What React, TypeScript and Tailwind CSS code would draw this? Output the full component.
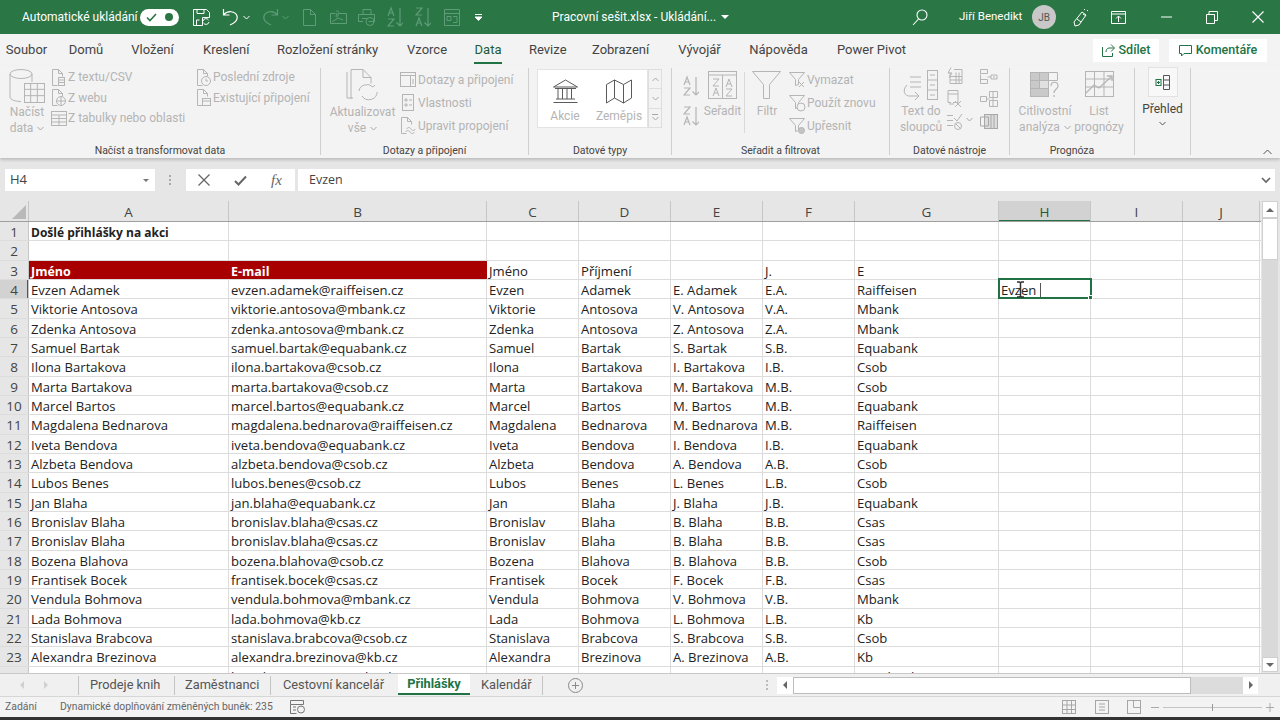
import React from 'react';

const G = '#b5b5b5';
const DIM = '#5f9c79';

const Ic = ({ w, h, s = G, sw = 1, children }: { w: number; h: number; s?: string; sw?: number; children: React.ReactNode }) => (
  <svg width={w} height={h} viewBox={`0 0 ${w} ${h}`} fill="none" stroke={s} strokeWidth={sw} className="shrink-0">
    {children}
  </svg>
);

const Chevron = ({ s = '#a8a8a8' }: { s?: string }) => (
  <svg width="7" height="5" viewBox="0 0 7 5" fill="none" stroke={s} className="shrink-0">
    <path d="M.5 1l3 3 3-3" />
  </svg>
);

const Doc = ({ children }: { children?: React.ReactNode }) => (
  <Ic w={16} h={19}>
    <path d="M1.5 17.5v-16h6l4 4v3M7.5 1.5v4h4M1.5 17.5h5" />
    {children}
  </Ic>
);

const Funnel = ({ children }: { children?: React.ReactNode }) => (
  <Ic w={17} h={18}>
    <path d="M.5 1.5h15l-6 7v5l-3 1v-6z" />
    {children}
  </Ic>
);

const AZ = ({ s = G, flip = false }: { s?: string; flip?: boolean }) => (
  <svg width="16" height="22" viewBox="0 0 16 22" fill="none" stroke={s} strokeWidth="1.2" className="shrink-0">
    <path d="M13 2v18M9.5 16.5l3.500 3.500 3.500-3.500" />
    {flip ? (
      <>
        <path d="M1 2h6l-6 7h6" />
        <path d="M1 20l3-8 3 8M2 17h4" />
      </>
    ) : (
      <>
        <path d="M1 10l3-8 3 8M2 7h4" />
        <path d="M1 13h6l-6 7h6" />
      </>
    )}
  </svg>
);

const Table = ({ x, y, w, h }: { x: number; y: number; w: number; h: number }) => (
  <g>
    <rect x={x + 0.5} y={y + 0.5} width={w} height={h} fill="#f3f3f3" />
    <path d={`M${x + 0.5} ${y + h / 3}h${w}M${x + 0.5} ${y + (2 * h) / 3}h${w}M${x + w / 3} ${y}v${h}M${x + (2 * w) / 3} ${y}v${h}`} />
  </g>
);

const Small = ({ icon, label, gap = 'gap-[1px]', h = 'h-[23px]', iw = 'w-[16px]' }: { icon: React.ReactNode; label: string; gap?: string; h?: string; iw?: string }) => (
  <div className={`flex items-center whitespace-nowrap text-[12px] text-[#b4b4b4] ${gap} ${h}`}>
    <div className={`flex justify-center ${iw}`}>{icon}</div>
    <span>{label}</span>
  </div>
);

const Big = ({ icon, lines, w, caret = false, cls = '' }: { icon: React.ReactNode; lines: string[]; w: string; caret?: boolean; cls?: string }) => (
  <div className={`flex flex-col items-center text-[12px] leading-[16px] text-[#b4b4b4] ${w} ${cls}`}>
    <div className="flex h-[36px] items-center justify-center">{icon}</div>
    {lines.map((l, i) => (
      <div key={l} className="flex items-center gap-[4px] whitespace-nowrap">
        {l}
        {caret && i === lines.length - 1 && <Chevron />}
      </div>
    ))}
  </div>
);

const Group = ({ w, label, children }: { w: string; label: string; children: React.ReactNode }) => (
  <div className={`my-[2px] flex h-[87px] shrink-0 flex-col border-r border-[#cfcfcf] ${w}`}>
    <div className="flex h-[74px]">{children}</div>
    <div className="h-[13px] whitespace-nowrap text-center text-[10.500px] leading-[17px] text-[#444444]">{label}</div>
  </div>
);

const tabs = [
  ['Soubor', 'w-[43px] ml-[5px]'],
  ['Domů', 'w-[36px] ml-[20px]'],
  ['Vložení', 'w-[43px] ml-[27px]'],
  ['Kreslení', 'w-[45px] ml-[29px]'],
  ['Rozložení stránky', 'w-[101px] ml-[29px]'],
  ['Vzorce', 'w-[40px] ml-[29px]'],
  ['Data', 'w-[28px] ml-[27px]'],
  ['Revize', 'w-[36px] ml-[27px]'],
  ['Zobrazení', 'w-[57px] ml-[27px]'],
  ['Vývojář', 'w-[45px] ml-[28px]'],
  ['Nápověda', 'w-[61px] ml-[26px]'],
  ['Power Pivot', 'w-[68px] ml-[28px]'],
];

const people = [
  ['Evzen', 'Adamek', 'raiffeisen'],
  ['Viktorie', 'Antosova', 'mbank'],
  ['Zdenka', 'Antosova', 'mbank'],
  ['Samuel', 'Bartak', 'equabank'],
  ['Ilona', 'Bartakova', 'csob'],
  ['Marta', 'Bartakova', 'csob'],
  ['Marcel', 'Bartos', 'equabank'],
  ['Magdalena', 'Bednarova', 'raiffeisen'],
  ['Iveta', 'Bendova', 'equabank'],
  ['Alzbeta', 'Bendova', 'csob'],
  ['Lubos', 'Benes', 'csob'],
  ['Jan', 'Blaha', 'equabank'],
  ['Bronislav', 'Blaha', 'csas'],
  ['Bronislav', 'Blaha', 'csas'],
  ['Bozena', 'Blahova', 'csob'],
  ['Frantisek', 'Bocek', 'csas'],
  ['Vendula', 'Bohmova', 'mbank'],
  ['Lada', 'Bohmova', 'kb'],
  ['Stanislava', 'Brabcova', 'csob'],
  ['Alexandra', 'Brezinova', 'kb'],
  ['Lucie', 'Brezinova', 'equabank'],
];

const cap = (s: string) => s[0].toUpperCase() + s.slice(1);

const rows: string[][] = [
  ['Došlé přihlášky na akci', '', '', '', '', '', '', '', '', ''],
  ['', '', '', '', '', '', '', '', '', ''],
  ['Jméno', 'E-mail', 'Jméno', 'Příjmení', '', 'J.', 'E', '', '', ''],
  ...people.map(([f, l, d]) => [
    `${f} ${l}`,
    `${f.toLowerCase()}.${l.toLowerCase()}@${d}.cz`,
    f,
    l,
    `${f[0]}. ${l}`,
    `${f[0]}.${l[0]}.`,
    cap(d),
    '',
    '',
    '',
  ]),
];

const colWidths = ['w-[200px]', 'w-[258px]', 'w-[92px]', 'w-[92px]', 'w-[92px]', 'w-[92px]', 'w-[144px]', 'w-[92px]', 'w-[92px]', 'w-[77px]'];
const colNames = ['A', 'B', 'C', 'D', 'E', 'F', 'G', 'H', 'I', 'J'];

export default function App() {
  return (
    <div className="flex h-[720px] w-[1280px] flex-col overflow-hidden bg-[#e6e6e6] font-['Roboto',sans-serif]">
      {/* title bar */}
      <div className="flex h-[34px] shrink-0 items-center bg-[#2a7645] text-white">
        <span className="ml-[22px] w-[118px] whitespace-nowrap text-[12px]">Automatické ukládání</span>
        <div className="flex h-[17px] w-[39px] items-center justify-between rounded-full bg-white px-[6px]">
          <Ic w={11} h={9} s="#2a7645" sw={1.6}><path d="M1 4.500l3 3 6-6.500" /></Ic>
          <div className="h-[8px] w-[8px] rounded-full bg-[#2a7645]" />
        </div>
        <div className="ml-[14px]">
          <Ic w={17} h={17} s="#ffffff">
            <path d="M.5.500h13l3 3v5h-7v8h-9zM4 .500v4h7v-4M3.500 16v-5h3" />
            <path d="M10 12a3 3 0 0 1 5.500-1M16 13a3 3 0 0 1-5.500 1" />
          </Ic>
        </div>
        <div className="ml-[12px]">
          <Ic w={17} h={18} s="#ffffff" sw={1.2}>
            <path d="M1.500 1v6h6M1.500 7c4-5 12-4 13.500 1 1 4-2 7-7 9" />
          </Ic>
        </div>
        <div className="ml-[4px]"><Chevron s="#ffffff" /></div>
        <div className="ml-[12px]">
          <Ic w={17} h={18} s={DIM} sw={1.2}>
            <path d="M15.500 1v6h-6M15.500 7c-4-5-12-4-13.500 1-1 4 2 7 7 9" />
          </Ic>
        </div>
        <div className="ml-[3px]"><Chevron s={DIM} /></div>
        <div className="ml-[14px]">
          <Ic w={13} h={17} s={DIM}><path d="M.5.500h7l5 5v11h-12zM7.500.500v5h5" /></Ic>
        </div>
        <div className="ml-[14px]">
          <Ic w={17} h={15} s={DIM}><path d="M.5 3.500h5M9 3.500h7.500v10H.5v-10M2 12l6-4 5 2M6 1.500c2-1.500 3 0 2.500 2l-1 3c-.5 1-2 .5-1.500-.5l1-3" /></Ic>
        </div>
        <div className="ml-[11px]">
          <Ic w={18} h={17} s={DIM}><path d="M5 5V.5h8V5M.5 5.500h16v7h-6M5 12.500H.5v-7M4 9.500h5" /><circle cx="12" cy="12.500" r="4" /></Ic>
        </div>
        <div className="ml-[11px]"><AZ s={DIM} /></div>
        <div className="ml-[12px]"><AZ s={DIM} flip /></div>
        <div className="ml-[13px]">
          <Ic w={16} h={17} s={DIM}><path d="M.5.500h15v16H.5zM.5 4.500h15M3 7.500h4v4H3zM9 7.500h4v6H9" /></Ic>
        </div>
        <div className="ml-[14px]">
          <Ic w={9} h={9} s="#ffffff"><path d="M1 1.500h7" /><path d="M1 4l3.500 3.500L8 4z" fill="#ffffff" /></Ic>
        </div>
        <span className="ml-[69px] w-[163px] whitespace-nowrap text-[12px]">Pracovní sešit.xlsx  -  Ukládání...</span>
        <div className="ml-[6px] h-0 w-0 border-x-[4px] border-t-[4px] border-x-transparent border-t-white" />
        <div className="ml-[183px]">
          <Ic w={16} h={17} s="#ffffff" sw={1.1}><circle cx="10" cy="6" r="5" /><path d="M6.500 10L1 16" /></Ic>
        </div>
        <span className="ml-[31px] w-[73px] whitespace-nowrap text-[11.500px]">Jiří Benedikt</span>
        <div className="flex h-[24px] w-[24px] items-center justify-center rounded-full bg-[#c8c8c8] text-[10px] text-[#555555]">JB</div>
        <div className="ml-[16px]">
          <Ic w={17} h={19} s="#ffffff"><path d="M2 14L10 4l4 3-7 10-4 1zM5 11l4 3M12 2l1-1M15 3l1-1M11 6l3 2" /></Ic>
        </div>
        <div className="ml-[22px]">
          <Ic w={15} h={13} s="#ffffff"><path d="M.5.500h14v12H.5zM.5 3h14" /><path d="M7.500 11V5M5 7.500l2.500-2.500L10 7.500" /></Ic>
        </div>
        <div className="ml-[35px]"><Ic w={11} h={2} s="#ffffff"><path d="M0 1h11" /></Ic></div>
        <div className="ml-[34px]">
          <Ic w={12} h={13} s="#ffffff"><path d="M.5 3.500h8v9h-8zM3 3.500v-3h8.500v9H8.500" /></Ic>
        </div>
        <div className="ml-[34px]"><Ic w={12} h={12} s="#ffffff" sw={1.2}><path d="M.5.500l11 11M11.500.500l-11 11" /></Ic></div>
      </div>

      {/* ribbon tabs */}
      <div className="flex h-[32px] shrink-0 items-center bg-[#f3f3f3] text-[13px] text-[#444444]">
        {tabs.map(([t, cls]) => (
          <div key={t} className={`relative whitespace-nowrap text-center ${cls} ${t === 'Data' ? 'text-[#1d5c38]' : ''}`}>
            {t}
            {t === 'Data' && <div className="absolute bottom-[-4px] left-0 right-0 h-[2px] bg-[#217346]" />}
          </div>
        ))}
        <div className="ml-[188px] flex h-[23px] w-[66px] items-center justify-center gap-[4px] bg-white text-[12.500px] font-medium text-[#217346]">
          <Ic w={13} h={13} s="#217346"><path d="M9 .5l3.500 3.500L9 7.500M12 4H7C5 4 4 6 4 8M.5 3v9.500h10V9" /></Ic>
          Sdílet
        </div>
        <div className="ml-[10px] flex h-[23px] w-[98px] items-center justify-center gap-[4px] bg-white text-[12.500px] font-medium text-[#217346]">
          <Ic w={13} h={13} s="#217346"><path d="M.5 1.500h12v8H5l-2.500 2.500V9.500h-2z" /></Ic>
          Komentáře
        </div>
      </div>

      {/* ribbon */}
      <div className="relative z-10 flex h-[92px] shrink-0 bg-[#f3f3f3] shadow-[0_2px_3px_rgba(0,0,0,0.18)]">
        <Group w="w-[321px]" label="Načíst a transformovat data">
          <Big
            w="w-[40px] ml-[7px]"
            caret
            lines={['Načíst', 'data']}
            icon={
              <Ic w={40} h={36}>
                <ellipse cx="14" cy="6" rx="11" ry="4.500" />
                <path d="M3 6v23c0 2.500 5 4.500 11 4.500M25 6v8" />
                <Table x={17} y={15} w={20} h={19} />
              </Ic>
            }
          />
          <div className="ml-[4px] mt-[-1px] flex w-[145px] flex-col">
            <Small h="h-[20.500px]" label="Z textu/CSV" icon={<Doc><rect x="7.500" y="9.500" width="6" height="8" fill="#f3f3f3" /><path d="M7.500 12h6M7.500 14.500h6" /></Doc>} />
            <Small h="h-[20.500px]" label="Z webu" icon={<Doc><circle cx="10" cy="13" r="4.500" fill="#f3f3f3" /><path d="M5.500 13h9M10 8.500v9" /></Doc>} />
            <Small h="h-[20.500px]" label="Z tabulky nebo oblasti" icon={<Ic w={16} h={15}><rect x=".5" y=".5" width="15" height="14" /><path d="M.5 4h15M.5 7.500h15M.5 11h15M8 4v10.500" /></Ic>} />
          </div>
          <div className="mt-[-1px] flex flex-col">
            <Small h="h-[20.500px]" label="Poslední zdroje" icon={<Doc><circle cx="10" cy="13" r="4.500" fill="#f3f3f3" /><path d="M10 10.500V13h2" /></Doc>} />
            <Small h="h-[20.500px]" label="Existující připojení" icon={<Doc><rect x="6.500" y="10.500" width="8" height="7" fill="#f3f3f3" /><path d="M6.500 13h8" /></Doc>} />
          </div>
        </Group>

        <Group w="w-[208px]" label="Dotazy a připojení">
          <Big
            w="w-[65px] ml-[9px]"
            caret
            lines={['Aktualizovat', 'vše']}
            icon={
              <Ic w={34} h={34}>
                <path d="M1 3v26h6" />
                <path d="M5 30V.5h12l8 8v6M17 .5v8h8" />
                <path d="M13 22a8 7 0 0 1 14-4l2-2M31 23a8 7 0 0 1-15 4" />
              </Ic>
            }
          />
          <div className="ml-[5px] flex flex-col">
            <Small gap="gap-[2px]" label="Dotazy a připojení" icon={<Ic w={16} h={15}><rect x=".5" y=".5" width="15" height="14" /><path d="M.5 3.500h15M10.500 3.500v11M13 7v5" /></Ic>} />
            <Small gap="gap-[2px]" label="Vlastnosti" icon={<Ic w={12} h={17}><rect x=".5" y=".5" width="11" height="16" /><path d="M3 5h2v2H3zM3 10h2v2H3zM7 6h3M7 11h3" /></Ic>} />
            <Small gap="gap-[2px]" label="Upravit propojení" icon={<Doc><path d="M7 13c0-2 3-2 4 0s4 2 4 0M6 16c0-2 3-2 4 0s4 2 4 0" /></Doc>} />
          </div>
        </Group>

        <Group w="w-[143px]" label="Datové typy">
          <div className="ml-[8px] mt-[1px] flex h-[59px] w-[111px] border border-[#e3e3e3] bg-white text-[12px] leading-[16px] text-[#b4b4b4]">
            <div className="flex w-[54px] flex-col items-center pt-[9px]">
              <Ic w={27} h={25} s="#5a5a5a" sw={1}>
                <path d="M13.500 1L1.500 8h24zM3 9.500h21M4 20h19M1.500 23.500h24M6 10v10M10.500 10v10M15 10v10M19.500 10v10" />
              </Ic>
              <span className="mt-[4px]">Akcie</span>
            </div>
            <div className="flex w-[54px] flex-col items-center pt-[9px]">
              <Ic w={28} h={25} s="#5a5a5a" sw={1}>
                <path d="M1.500 5.500l8-4.500 9 4.500 8-4.500v18l-8 5-9-5-8 5zM9.500 1v18M18.500 5.500V24" />
              </Ic>
              <span className="mt-[4px]">Zeměpis</span>
            </div>
          </div>
          <div className="mt-[1px] flex h-[59px] w-[14px] flex-col">
            <div className="flex flex-1 items-center justify-center border border-[#dedede]"><span className="rotate-180"><Chevron /></span></div>
            <div className="flex flex-1 items-center justify-center border-x border-[#dedede]"><Chevron /></div>
            <div className="flex flex-1 flex-col items-center justify-center gap-[1px] border border-[#dedede]">
              <div className="h-px w-[6px] bg-[#a8a8a8]" />
              <Chevron />
            </div>
          </div>
        </Group>

        <Group w="w-[218px]" label="Seřadit a filtrovat">
          <div className="ml-[11px] mt-[7px] flex flex-col gap-[8px]">
            <AZ />
            <AZ flip />
          </div>
          <Big
            w="w-[37px] ml-[5px]"
            lines={['Seřadit']}
            cls="mt-[-1px]"
            icon={
              <Ic w={30} h={29}>
                <rect x=".5" y=".5" width="28" height="27" />
                <path d="M.5 4h28M14.500 4v24" />
                <path d="M5 8h6l-6 7h6M5 25l3-8 3 8M6 22h4M18 16l3-8 3 8M19 13h4M18 18h6l-6 7h6" />
              </Ic>
            }
          />
          <div className="ml-[3px] mt-[4px] h-[61px] w-px bg-[#d9d9d9]" />
          <Big
            w="w-[30px] ml-[7px]"
            lines={['Filtr']}
            cls="mt-[-1px]"
            icon={
              <Ic w={30} h={30}>
                <path d="M.5 1.500h28l-11 13v14h-6v-14z" />
              </Ic>
            }
          />
          <div className="ml-[7px] flex flex-col">
            <Small gap="gap-[2px]" label="Vymazat" icon={<Funnel><path d="M10 11l5 5M15 11l-5 5" /></Funnel>} />
            <Small gap="gap-[2px]" label="Použít znovu" icon={<Funnel><circle cx="12" cy="13" r="4" fill="#f3f3f3" /></Funnel>} />
            <Small gap="gap-[2px]" label="Upřesnit" icon={<Funnel><circle cx="12.500" cy="13.500" r="3" fill="#c4c4c4" /></Funnel>} />
          </div>
        </Group>

        <Group w="w-[120px]" label="Datové nástroje">
          <Big
            w="w-[48px] ml-[7px]"
            lines={['Text do', 'sloupců']}
            cls="mt-[-1px]"
            icon={
              <Ic w={36} h={31}>
                <path d="M7 7h11M7 12h11M7 17h11" />
                <rect x="24.500" y=".5" width="10" height="29" />
                <path d="M24.500 10h10M24.500 20h10M27 5h5M27 15h5M27 25h5" />
                <path d="M4 15c-5 5-3 12 4 11h7M12 22l4 4-4 4" />
              </Ic>
            }
          />
          <div className="ml-[1px] mt-[-2px] flex w-[17px] flex-col items-center gap-[5px] pt-[1px]">
            <Ic w={17} h={17}><path d="M4 5.500v11h12v-14H8M4 9.500h12M4 13h12M10 5.500v11M13 5.500v11M5 .5L2 6h4l-3 5" /></Ic>
            <Ic w={17} h={19}><path d="M2 1.500h10v12H7M2 1.500v12h3M2 5h10" /><path d="M9 12l6 6M15 12l-6 6M3 15h5" /></Ic>
            <Ic w={17} h={17}><path d="M1 2.500h6M1 7.500h6M1 12.500h6M8 5l3 3 5-7" /><circle cx="12" cy="13" r="3.500" /><path d="M9.500 10.500l5 5" /></Ic>
          </div>
          <div className="ml-[1px] flex h-[66px] w-[11px] items-end justify-center pb-[12px]"><Chevron /></div>
          <div className="ml-[5px] mt-[1px] flex flex-col items-center gap-[7px]">
            <Ic w={18} h={15}><path d="M.5.5h7v4h-7zM.5 5.500v9h7v-4h-7M11 6h6v4h-6zM7.500 8H11M13 8h2" /></Ic>
            <Ic w={18} h={16}><path d="M.5 5.500h6v5h-6zM9.500.5h8v6h-8zM9.500 9.500h8v6h-8zM6.500 8h3M13 .5v15" /></Ic>
            <Ic w={18} h={15} s="#a8a8a8"><rect x="4.500" y=".5" width="13" height="14" fill="#dcdcdc" /><path d="M.5 3h8v9h-8zM11 .5v14M14 .5v14" /></Ic>
          </div>
        </Group>

        <Group w="w-[125px]" label="Prognóza">
          <Big
            w="w-[60px] ml-[5px]"
            caret
            cls="mt-[-1px]"
            lines={['Citlivostní', 'analýza']}
            icon={
              <Ic w={30} h={29}>
                <rect x=".5" y="1.500" width="9" height="8" fill="#c9c9c9" />
                <rect x="9.500" y="1.500" width="9" height="8" fill="#c9c9c9" />
                <rect x=".5" y="9.500" width="9" height="8" fill="#c9c9c9" />
                <rect x="9.500" y="9.500" width="9" height="8" fill="#e0e0e0" />
                <rect x=".5" y="17.500" width="18" height="8" fill="#c9c9c9" />
                <path d="M18.500 1.500h9v8h-9M18.500 9.500h5" />
                <path d="M21 15c0-5 7-5 7 0 0 3-4 3-4 7M24 24v2" strokeWidth="1.200" />
              </Ic>
            }
          />
          <Big
            w="w-[48px]"
            lines={['List', 'prognózy']}
            cls="mt-[-1px]"
            icon={
              <Ic w={29} h={28}>
                <rect x=".5" y=".5" width="28" height="25" />
                <path d="M.5 8h28M.5 16h28M9.500.5v25M19 .5v25" />
                <path d="M1 22l8-8 5 3 12-11M22 5h5v5" strokeWidth="1.300" />
              </Ic>
            }
          />
        </Group>

        <Group w="w-[56px]" label="">
          <div className="mt-[-1px] flex w-full flex-col items-center text-[12px] text-[#444444]">
            <div className="flex h-[30px] w-[30px] items-center justify-center border border-[#e2e2e2] bg-[#f8f8f8]">
              <Ic w={15} h={15} s="#555555">
                <path d="M8.500.5h6v14h-6zM8.500 5h6M8.500 10h6" />
                <rect x="1" y="4.500" width="5" height="6" stroke="#217346" />
                <path d="M3.500 6v3M2 7.500h3" stroke="#217346" />
              </Ic>
            </div>
            <span className="mt-[4px] leading-[16px]">Přehled</span>
            <div className="mt-[4px]"><Chevron s="#555555" /></div>
          </div>
        </Group>

        <div className="flex flex-1 items-end justify-end pb-[3px] pr-[8px]">
          <Ic w={9} h={6} s="#555555"><path d="M.5 5l4-4 4 4" /></Ic>
        </div>
      </div>

      {/* formula bar */}
      <div className="flex h-[43px] shrink-0 items-center bg-[#e6e6e6] pl-[5px] pt-[1px] text-[13px] text-[#444444] font-['Open_Sans',sans-serif]">
        <div className="flex h-[22px] w-[150px] items-center justify-between bg-white pl-[5px] pr-[6px]">
          H4
          <div className="h-0 w-0 border-x-[3px] border-t-[3px] border-x-transparent border-t-[#777777]" />
        </div>
        <div className="ml-[14px] flex flex-col gap-[2px]">
          <div className="h-[2px] w-[2px] bg-[#aaaaaa]" />
          <div className="h-[2px] w-[2px] bg-[#aaaaaa]" />
          <div className="h-[2px] w-[2px] bg-[#aaaaaa]" />
        </div>
        <div className="ml-[15px] flex h-[22px] w-[109px] items-center bg-white pl-[12px]">
          <Ic w={12} h={12} s="#666666" sw={1.300}><path d="M.5.500l11 11M11.500.500l-11 11" /></Ic>
          <div className="ml-[24px]">
            <Ic w={13} h={11} s="#666666" sw={2}><path d="M1 6l3.500 3.500L12 1.500" /></Ic>
          </div>
          <span className="ml-[24px] font-['Liberation_Serif',serif] text-[15px] italic text-[#666666]">fx</span>
        </div>
        <div className="ml-[3px] flex h-[22px] w-[977px] items-center justify-between bg-white pl-[11px] pr-[4px] text-[12.500px]">
          Evzen
          <Ic w={10} h={7} s="#666666" sw={1.700}><path d="M1 1l4 4 4-4" /></Ic>
        </div>
      </div>

      {/* sheet */}
      <div className="flex min-h-0 flex-1">
        <div className="flex w-[1261px] flex-col font-['Open_Sans',sans-serif] text-[13.100px] text-[#222222]">
          <div className="flex h-[21px] shrink-0 border-b border-[#9f9f9f] bg-[#e6e6e6] text-[13.500px] leading-[22px] text-[#444444]">
            <div className="flex w-[29px] items-end justify-end border-r border-[#c6c6c6] p-[2px]">
              <div className="h-0 w-0 border-b-[14px] border-l-[14px] border-b-[#b9b9b9] border-l-transparent" />
            </div>
            {colNames.map((c, i) => (
              <div
                key={c}
                className={`border-r border-[#c6c6c6] text-center ${colWidths[i]} ${c === 'H' ? 'bg-[#d2d2d2] text-[#1d5c38] shadow-[inset_0_-1px_0_#217346]' : ''}`}
              >
                {c}
              </div>
            ))}
          </div>
          <div className="min-h-0 flex-1 overflow-hidden bg-white">
            {rows.map((r, ri) => (
              <div key={ri} className="flex h-[19.330px] border-b border-[#dcdcdc] leading-[21px]">
                <div className={`w-[29px] shrink-0 border-r border-[#c6c6c6] text-center text-[13.500px] text-[#444444] ${ri === 3 ? 'bg-[#d2d2d2] text-[#1d5c38] shadow-[inset_-1px_0_0_#217346]' : 'bg-[#e6e6e6]'}`}>
                  {ri + 1}
                </div>
                {r.map((v, ci) => {
                  const head = ri === 2 && ci < 2;
                  return (
                    <div
                      key={ci}
                      className={`relative shrink-0 whitespace-nowrap border-r pl-[2px] ${colWidths[ci]} ${ri === 0 ? 'text-[12px] font-bold' : ''} ${
                        head ? 'border-[#a80000] bg-[#a80000] text-[12.500px] font-bold text-white' : 'border-[#dcdcdc]'
                      } ${ri === 0 && ci === 0 ? 'overflow-visible' : ri === 3 && ci === 7 ? 'overflow-visible' : 'overflow-hidden'}`}
                    >
                      {v}
                      {ri === 3 && ci === 7 && (
                        <>
                          <span>Evzen</span>
                          <div className="absolute bottom-[-1px] left-[-1px] right-[-2px] top-[-2px] border-2 border-[#217346]">
                            <div className="absolute bottom-[-3px] right-[-3px] h-[5px] w-[5px] border border-white bg-[#217346]" />
                          </div>
                          <div className="absolute left-[41px] top-[3px] h-[14px] w-px bg-[#555555]" />
                          <svg width="9" height="17" viewBox="0 0 9 17" fill="none" stroke="#333333" strokeWidth="1.500" className="absolute left-[17px] top-[1px]">
                            <path d="M1 1h2.500l1 1 1-1H8M4.500 2v13M1 16h2.500l1-1 1 1H8" />
                          </svg>
                        </>
                      )}
                    </div>
                  );
                })}
              </div>
            ))}
          </div>
        </div>
        <div className="flex w-[19px] flex-col pb-[1px] pl-[1px] pr-[2px]">
          <div className="flex h-[17px] items-center justify-center border border-[#d0d0d0] bg-white">
            <div className="h-0 w-0 border-x-[4px] border-b-[4px] border-x-transparent border-b-[#666666]" />
          </div>
          <div className="h-[42px] border border-[#d0d0d0] bg-white" />
          <div className="flex-1 bg-[#d9d9d9]" />
          <div className="flex h-[15px] items-center justify-center border border-[#d0d0d0] bg-white">
            <div className="h-0 w-0 border-x-[4px] border-t-[4px] border-x-transparent border-t-[#666666]" />
          </div>
        </div>
      </div>

      {/* sheet tabs */}
      <div className="flex h-[23px] shrink-0 items-center border-t border-[#c8c8c8] bg-[#f0f0f0] text-[12.800px] text-[#555555]">
        <div className="ml-[20px] h-0 w-0 border-y-[4px] border-r-[4px] border-y-transparent border-r-[#d0d0d0]" />
        <div className="ml-[20px] h-0 w-0 border-y-[4px] border-l-[4px] border-y-transparent border-l-[#d0d0d0]" />
        <div className="ml-[30px] flex h-[19px] items-center border-l border-[#c4c4c4] pl-[11px]">
          <span className="w-[84px] whitespace-nowrap">Prodeje knih</span>
        </div>
        <div className="flex h-[19px] items-center border-l border-[#c4c4c4] pl-[10px]">
          <span className="w-[85px] whitespace-nowrap">Zaměstnanci</span>
        </div>
        <div className="flex h-[19px] items-center border-l border-[#c4c4c4] pl-[12px]">
          <span className="w-[115px] whitespace-nowrap">Cestovní kancelář</span>
        </div>
        <div className="flex h-[21px] w-[72px] items-center justify-center self-start border-b-2 border-[#217346] bg-white font-bold text-[#217346]">
          Přihlášky
        </div>
        <div className="flex h-[19px] items-center pl-[11px]">
          <span className="w-[61px] whitespace-nowrap">Kalendář</span>
        </div>
        <div className="h-[19px] border-l border-[#c4c4c4]" />
        <div className="ml-[25px]">
          <Ic w={15} h={15} s="#8a8a8a"><circle cx="7.500" cy="7.500" r="7" /><path d="M7.500 4v7M4 7.500h7" /></Ic>
        </div>
        <div className="ml-[183px] flex flex-col gap-[2px]">
          <div className="h-[2px] w-[2px] bg-[#bbbbbb]" />
          <div className="h-[2px] w-[2px] bg-[#bbbbbb]" />
          <div className="h-[2px] w-[2px] bg-[#bbbbbb]" />
        </div>
        <div className="ml-[9px] flex h-[17px] w-[481px] items-stretch bg-[#dcdcdc]">
          <div className="flex w-[16px] items-center justify-center bg-white">
            <div className="h-0 w-0 border-y-[4px] border-r-[4px] border-y-transparent border-r-[#666666]" />
          </div>
          <div className="w-[398px] border border-[#bdbdbd] bg-white" />
          <div className="flex-1" />
          <div className="flex w-[15px] items-center justify-center bg-white">
            <div className="h-0 w-0 border-y-[4px] border-l-[4px] border-y-transparent border-l-[#666666]" />
          </div>
        </div>
      </div>

      {/* status bar */}
      <div className="flex h-[21px] shrink-0 items-center border-t border-[#d6d6d6] bg-[#f3f3f3] text-[10.400px] text-[#666666]">
        <span className="ml-[5px] w-[55px]">Zadání</span>
        <span className="w-[230px] whitespace-nowrap">Dynamické doplňování změněných buněk: 235</span>
        <Ic w={16} h={14} s="#777777"><path d="M.5.500h13v4H.5zM.5 4.500v9h6M3 7h3M3 10h3" /><circle cx="11" cy="9.500" r="3.500" /></Ic>
        <div className="ml-[756px]">
          <Ic w={14} h={14} s="#a6a6a6"><rect x=".5" y=".5" width="13" height="13" /><path d="M.5 5h13M.5 9.500h13M5 .5v13M9.500 .5v13" /></Ic>
        </div>
        <div className="ml-[19px]">
          <Ic w={14} h={14} s="#a6a6a6"><rect x=".5" y=".5" width="13" height="13" /><path d="M4 4h6M4 7h6M4 10h6" /></Ic>
        </div>
        <div className="ml-[18px]">
          <Ic w={14} h={14} s="#a6a6a6"><rect x=".5" y=".5" width="13" height="13" /><path d="M6.500 .5v7h7" /></Ic>
        </div>
        <div className="ml-[10px] h-px w-[8px] bg-[#aaaaaa]" />
        <div className="ml-[4px] flex h-px w-[99px] items-center justify-center bg-[#c4c4c4]">
          <div className="h-[7px] w-px bg-[#999999]" />
        </div>
        <Ic w={16} h={9} s="#aaaaaa"><path d="M8 0v9M4 4.500h8" /></Ic>
      </div>
      <div className="h-[3px] shrink-0 bg-[#333333]" />
    </div>
  );
}
